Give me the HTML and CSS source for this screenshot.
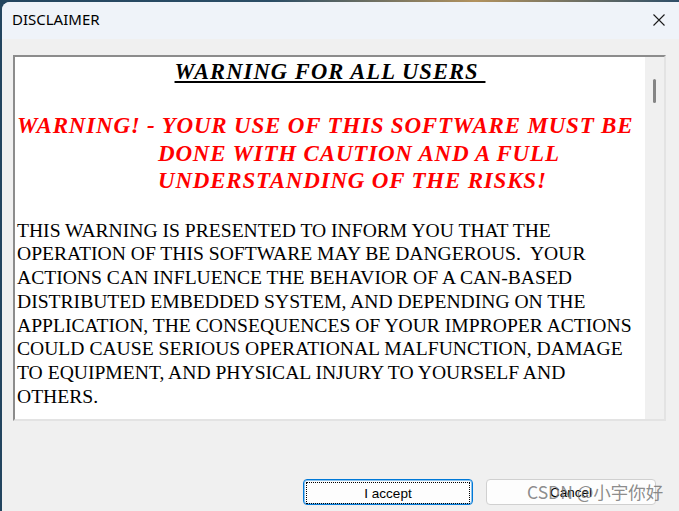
FILE: index.html
```html
<!DOCTYPE html>
<html lang="en">
<head>
  <meta charset="UTF-8">
  <title>DISCLAIMER</title>
  <link rel="stylesheet" href="styles.css">
</head>
<body>

  <div class="window">
    <!-- Title bar -->
    <div class="titlebar">
      <span class="title">DISCLAIMER</span>
      <span class="close">
        <svg width="12" height="12" viewBox="0 0 12 12"><path d="M0.5 0.5 L11.5 11.5 M11.5 0.5 L0.5 11.5" stroke="#1b1b1b" stroke-width="1.1" fill="none"/></svg>
      </span>
    </div>

    <div class="content">
      <!-- Rich text box with the disclaimer -->
      <div class="richbox">
        <div class="text">
          <p class="heading">WARNING FOR ALL USERS&nbsp;</p>
          <p class="warn">WARNING! - YOUR USE OF THIS SOFTWARE MUST BE<br>
            <span class="indent">DONE WITH CAUTION AND A FULL</span><br>
            <span class="indent">UNDERSTANDING OF THE RISKS!</span></p>
          <p class="body-text">THIS WARNING IS PRESENTED TO INFORM YOU THAT THE<br>
OPERATION OF THIS SOFTWARE MAY BE DANGEROUS.&nbsp; YOUR<br>
ACTIONS CAN INFLUENCE THE BEHAVIOR OF A CAN-BASED<br>
DISTRIBUTED EMBEDDED SYSTEM, AND DEPENDING ON THE<br>
APPLICATION, THE CONSEQUENCES OF YOUR IMPROPER ACTIONS<br>
COULD CAUSE SERIOUS OPERATIONAL MALFUNCTION, DAMAGE<br>
TO EQUIPMENT, AND PHYSICAL INJURY TO YOURSELF AND<br>
OTHERS.</p>
        </div>
        <div class="scrollbar"><div class="thumb"></div></div>
      </div>

      <!-- Buttons -->
      <div class="buttons">
        <button class="btn btn-default"><span class="focus">I accept</span></button>
        <button class="btn">Cancel</button>
      </div>
    </div>

    <div class="watermark">CSDN @小宇你好</div>
  </div>

</body>
</html>
```

FILE: styles.css
```css
body {
  margin: 0;
  background: linear-gradient(90deg, #23455f 0%, #2b4d66 40%, #b2925e 70%, #2e4e68 100%);
  height: 511px;
  overflow: hidden;
}
.window {
  position: relative;
  margin: 2px 0 0 2px;
  height: 509px;
  border-top-left-radius: 8px;
  overflow: hidden;
  background-color: #f0f0f0;
}
.titlebar {
  height: 37px;
  background-color: #eff3f9;
  display: flex;
  align-items: center;
  justify-content: space-between;
  padding: 0 14px 0 10px;
}
.title {
  font-family: "Noto Sans", sans-serif;
  font-size: 15px;
  color: #000;
  margin-top: -4px;
}
.close {
  display: flex;
  margin-top: -1px;
}
.content {
  padding: 16px 23px 0 11px;
}
.richbox {
  display: flex;
  width: 649px;
  height: 362px;
  background-color: #fff;
  border-style: solid;
  border-width: 2px;
  border-color: #8c8c8c #e3e3e3 #e3e3e3 #8c8c8c;
}
.text {
  flex: 1;
  padding: 0 0 0 2px;
  font-family: "Liberation Serif", "Times New Roman", serif;
  white-space: nowrap;
  overflow: hidden;
}
.text p {
  margin: 0;
}
.heading {
  text-align: center;
  font-size: 22.5px;
  font-weight: bold;
  font-style: italic;
  letter-spacing: 1.1px;
  text-decoration: underline;
  line-height: 30px;
  padding-right: 2px;
}
.warn {
  color: #ff0000;
  font-size: 23px;
  font-weight: bold;
  font-style: italic;
  letter-spacing: 0.8px;
  line-height: 27.5px;
  margin-top: 25px !important;
}
.indent {
  padding-left: 141px;
}
.body-text {
  font-size: 19.6px;
  line-height: 23.8px;
  margin-top: 24px !important;
}
.scrollbar {
  width: 19px;
  background-color: #f0f0f0;
  position: relative;
}
.thumb {
  position: absolute;
  left: 8px;
  top: 22px;
  width: 3px;
  height: 24px;
  border-radius: 2px;
  background-color: #858585;
}
.buttons {
  display: flex;
  justify-content: flex-end;
  gap: 13px;
  margin-top: 58px;
}
.btn {
  width: 170px;
  height: 26px;
  padding: 2px;
  background-color: #fdfdfd;
  border: 1px solid #d0d0d0;
  border-radius: 4px;
  font-family: "Liberation Sans", Arial, sans-serif;
  font-size: 13.5px;
  color: #000;
}
.btn-default {
  border-color: #0078d7;
  box-shadow: 0 0 0 1px #8cc2ec inset;
}
.focus {
  display: flex;
  align-items: center;
  justify-content: center;
  height: 100%;
  border: 1px dotted #000;
}
.watermark {
  position: absolute;
  left: 525px;
  top: 477px;
  font-family: "Noto Sans CJK SC", sans-serif;
  font-size: 17.5px;
  color: rgba(110, 110, 110, 0.8);
  pointer-events: none;
}
```
